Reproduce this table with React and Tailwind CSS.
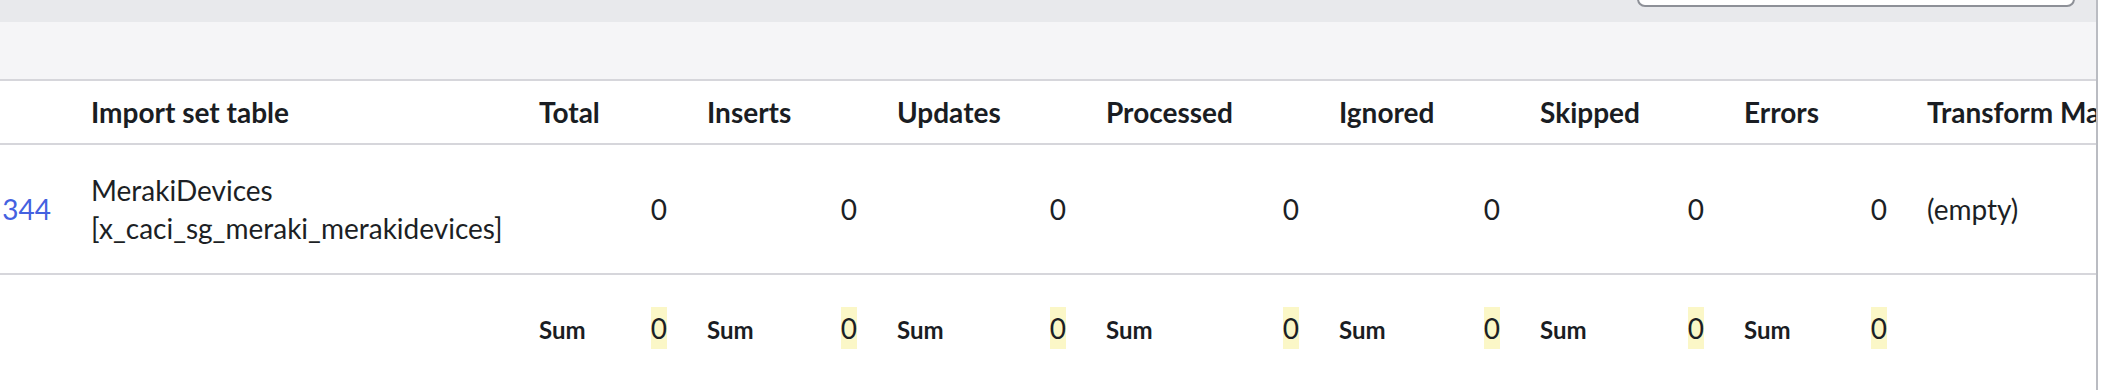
import React from 'react';

const cols =
  'grid grid-cols-[71px_448px_168px_190px_209px_233px_201px_204px_183px_260px]';

const headers = ['Total', 'Inserts', 'Updates', 'Processed', 'Ignored', 'Skipped', 'Errors'];

const App = () => {
  return (
    <div className="w-[2098px] min-h-[390px] bg-white border-r-2 border-[#babcc2] overflow-hidden font-['Lato',sans-serif] text-[#1c1f25]">
      {/* Top bar with search field */}
      <div className="h-[22px] bg-[#e8e9ec] flex justify-end items-start pr-[21px] overflow-hidden">
        <div className="w-[438px] h-[30px] -mt-[23px] bg-white border-2 border-[#8d9097] rounded-[8px]"></div>
      </div>

      {/* Toolbar strip */}
      <div className="h-[59px] bg-[#f5f5f7] border-b-2 border-[#d6d6db]"></div>

      {/* Header row */}
      <div className={`${cols} h-[64px] items-center border-b-2 border-[#d6d6db] text-[28px] font-bold text-[#1a1d23] whitespace-nowrap`}>
        <div></div>
        <div className="px-[20px]">Import set table</div>
        {headers.map((h) => (
          <div key={h} className="px-[20px]">
            {h}
          </div>
        ))}
        <div className="px-[20px]">Transform Map</div>
      </div>

      {/* Data row */}
      <div className={`${cols} h-[130px] items-center border-b-2 border-[#d6d6db] text-[28px] leading-[38px] whitespace-nowrap`}>
        <div className="pr-[20px] text-right text-[#4461e0]">344</div>
        <div className="px-[20px]">
          MerakiDevices
          <br />
          [x_caci_sg_meraki_merakidevices]
        </div>
        {headers.map((h) => (
          <div key={h} className="px-[20px] text-right">
            0
          </div>
        ))}
        <div className="px-[20px]">(empty)</div>
      </div>

      {/* Sum row */}
      <div className={`${cols} pt-[32px] pb-[48px] items-start whitespace-nowrap`}>
        <div></div>
        <div></div>
        {headers.map((h) => (
          <div key={h} className="px-[20px] flex justify-between items-baseline">
            <span className="text-[24px] font-bold text-[#1a1d23]">Sum</span>
            <span className="text-[28px] leading-normal bg-[#fbf7c7]">0</span>
          </div>
        ))}
        <div></div>
      </div>
    </div>
  );
};

export default App;
